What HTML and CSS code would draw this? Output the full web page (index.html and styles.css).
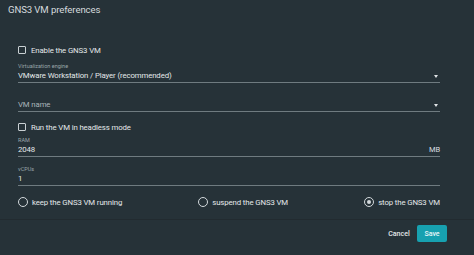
FILE: index.html
```html
<!DOCTYPE html>
<html>
<head>
<meta charset="utf-8">
<link rel="stylesheet" href="styles.css">
</head>
<body>
<div class="dialog">
  <div class="title">GNS3 VM preferences</div>
  <div class="content">
    <label class="check"><span class="box"></span><span>Enable the GNS3 VM</span></label>
    <div class="field f-engine">
      <div class="flabel">Virtualization engine</div>
      <div class="fvalue"><span>VMware Workstation / Player (recommended)</span><span class="arrow"></span></div>
    </div>
    <div class="field f-name">
      <div class="flabel"></div>
      <div class="fvalue"><span class="placeholder">VM name</span><span class="arrow"></span></div>
    </div>
    <label class="check c-headless"><span class="box"></span><span>Run the VM in headless mode</span></label>
    <div class="field f-ram">
      <div class="flabel">RAM</div>
      <div class="fvalue"><span>2048</span><span class="suffix">MB</span></div>
    </div>
    <div class="field f-cpu">
      <div class="flabel">vCPUs</div>
      <div class="fvalue"><span>1</span></div>
    </div>
    <div class="radios">
      <label class="radio"><span class="circle"></span><span>keep the GNS3 VM running</span></label>
      <label class="radio"><span class="circle"></span><span>suspend the GNS3 VM</span></label>
      <label class="radio"><span class="circle checked"></span><span>stop the GNS3 VM</span></label>
    </div>
  </div>
  <div class="actions">
    <button class="btn cancel">Cancel</button>
    <button class="btn save">Save</button>
  </div>
</div>
</body>
</html>
```
FILE: styles.css
```css
html, body {
  margin: 0;
  padding: 0;
  background: #263238;
  width: 474px;
  height: 255px;
  overflow: hidden;
  font-family: Roboto, "Liberation Sans", sans-serif;
  color: #e4e8ea;
}
.dialog {
  display: flex;
  flex-direction: column;
  height: 255px;
}
.title {
  font-size: 9.6px;
  line-height: 12px;
  color: #d5dbde;
  padding: 4px 0 0 8px;
  height: 12px;
  letter-spacing: -0.1px;
}
.content {
  padding: 28px 34px 0 18px;
  display: flex;
  flex-direction: column;
  letter-spacing: -0.12px;
}
.check {
  display: flex;
  align-items: center;
  gap: 5px;
  height: 12px;
  font-size: 7.8px;
}
.box {
  width: 6px;
  height: 6px;
  border: 1px solid #c9d0d3;
  border-radius: 1px;
}
.field {
  display: flex;
  flex-direction: column;
  border-bottom: 1px solid #6f7b80;
}
.flabel {
  font-size: 5.5px;
  line-height: 7px;
  height: 7px;
  color: #9aa6ab;
  letter-spacing: 0;
}
.fvalue {
  height: 12px;
  line-height: 12px;
  font-size: 7.8px;
  display: flex;
  justify-content: space-between;
  align-items: center;
}
.placeholder { color: #aab4b8; }
.arrow {
  width: 0;
  height: 0;
  border-left: 2.5px solid transparent;
  border-right: 2.5px solid transparent;
  border-top: 3px solid #e0e4e6;
  margin-right: 2px;
}
.suffix { font-size: 7.5px; color: #d9dee0; }
.f-engine { margin-top: 7px; }
.f-name { margin-top: 9px; }
.c-headless { margin-top: 9px; }
.f-ram { margin-top: 4px; }
.f-cpu { margin-top: 9px; }
.radios {
  display: flex;
  justify-content: space-between;
  margin-top: 10px;
  height: 12px;
}
.radio {
  display: flex;
  align-items: center;
  gap: 4px;
  font-size: 7.8px;
}
.circle {
  width: 8px;
  height: 8px;
  border: 1px solid #d3d9dc;
  border-radius: 50%;
  display: flex;
  align-items: center;
  justify-content: center;
}
.circle.checked::after {
  content: "";
  width: 4px;
  height: 4px;
  border-radius: 50%;
  background: #d3d9dc;
}
.actions {
  margin-top: 11px;
  border-top: 1px solid #222b30;
  display: flex;
  justify-content: flex-end;
  align-items: center;
  gap: 7px;
  padding: 5px 27px 0 0;
}
.btn {
  font-family: Roboto, "Liberation Sans", sans-serif;
  font-size: 7px;
  font-weight: 500;
  border: none;
  border-radius: 2px;
  height: 17px;
  padding: 0;
  cursor: pointer;
}
.cancel {
  background: transparent;
  color: #e4e8ea;
  width: 22px;
}
.save {
  background: #17a1b0;
  color: #e8f6f8;
  width: 30px;
}
```
